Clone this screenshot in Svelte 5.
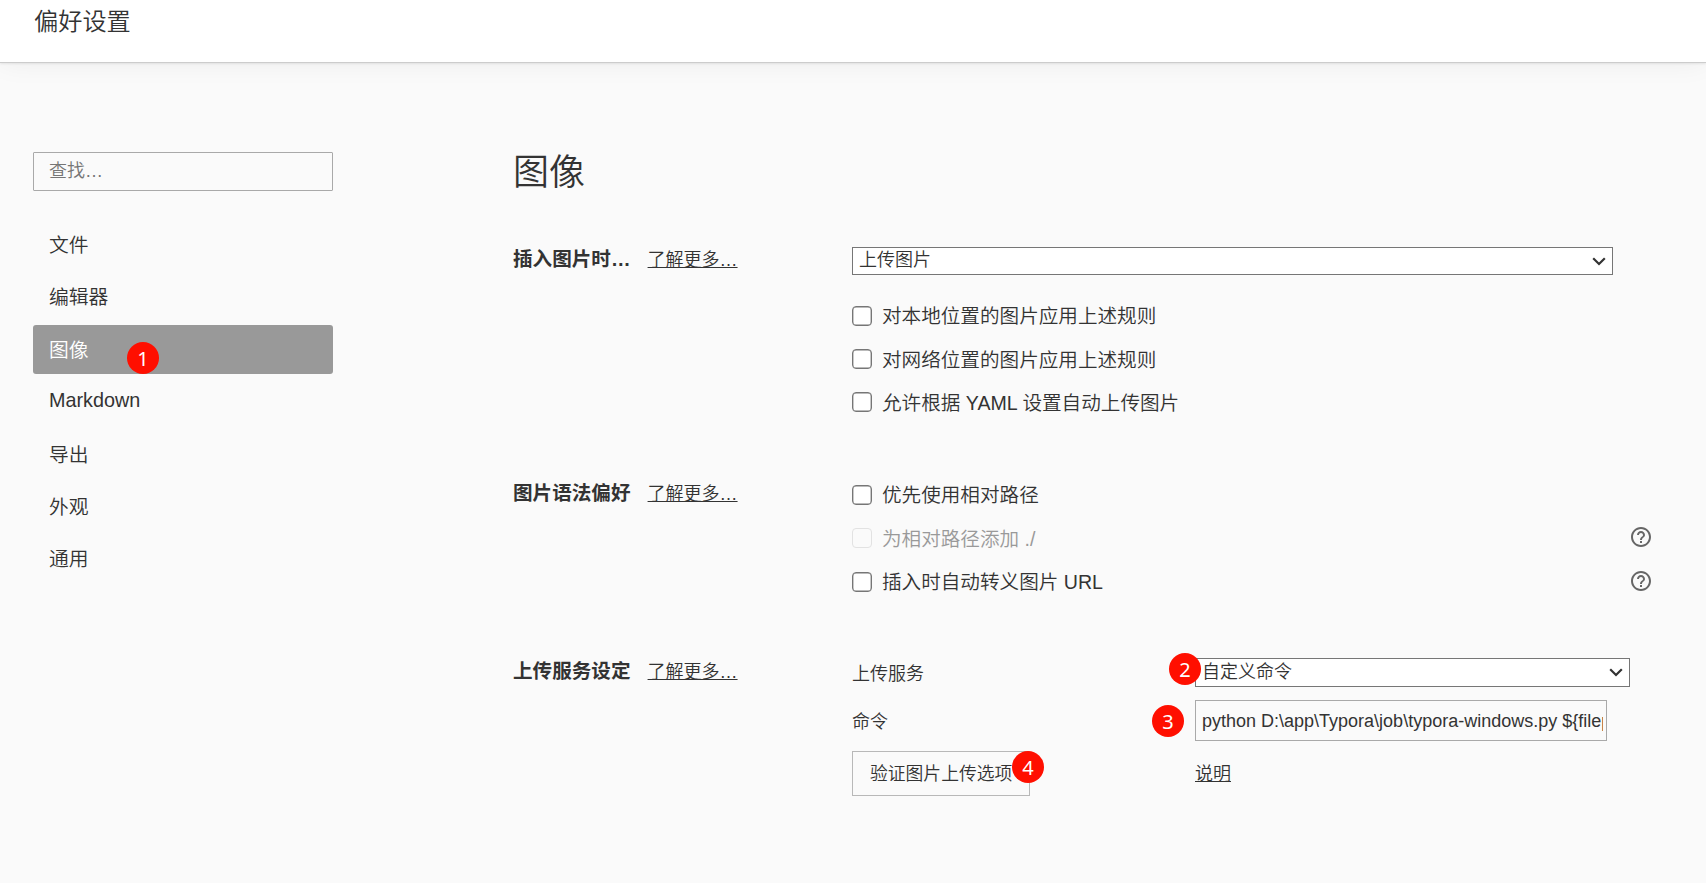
<script lang="ts">
  let active = $state("图像");
  let insertAction = $state("upload");
  let service = $state("custom");
  let command = $state("python D:\\app\\Typora\\job\\typora-windows.py ${filepath}");

  const menu = ["文件", "编辑器", "图像", "Markdown", "导出", "外观", "通用"];

  let insertRules = $state([
    { label: "对本地位置的图片应用上述规则", checked: false },
    { label: "对网络位置的图片应用上述规则", checked: false },
    { label: "允许根据 YAML 设置自动上传图片", checked: false },
  ]);

  let syntaxRules = $state([
    { label: "优先使用相对路径", checked: false, disabled: false, help: false },
    { label: "为相对路径添加 ./", checked: false, disabled: true, help: true },
    { label: "插入时自动转义图片 URL", checked: false, disabled: false, help: true },
  ]);
</script>

{#snippet chevron()}
  <svg class="chevron" viewBox="0 0 14 9" width="14" height="9">
    <path d="M1.2 1.2 L7 7 L12.8 1.2" fill="none" stroke="#333" stroke-width="2.2" />
  </svg>
{/snippet}

{#snippet heading(text: string)}
  <div class="heading">
    <strong>{text}</strong>
    <a href="#more">了解更多…</a>
  </div>
{/snippet}

<header>偏好设置</header>

<main>
  <aside>
    <input class="search" type="text" placeholder="查找…" />
    <nav>
      {#each menu as item}
        <button class="menu-item" class:active={item === active} onclick={() => (active = item)}>
          {item}
          {#if item === "图像"}
            <span class="badge one">1</span>
          {/if}
        </button>
      {/each}
    </nav>
  </aside>

  <div class="content">
    <h1>图像</h1>

    <section class="insert">
      {@render heading("插入图片时…")}
      <div class="body">
        <div class="select wide">
          <select bind:value={insertAction}>
            <option value="upload">上传图片</option>
            <option value="none">无特殊操作</option>
          </select>
          {@render chevron()}
        </div>
        <div class="rules">
          {#each insertRules as rule}
            <label class="rule">
              <input type="checkbox" bind:checked={rule.checked} />
              <span>{rule.label}</span>
            </label>
          {/each}
        </div>
      </div>
    </section>

    <section class="syntax">
      {@render heading("图片语法偏好")}
      <div class="body">
        {#each syntaxRules as rule}
          <div class="rule-row">
            <label class="rule" class:disabled={rule.disabled}>
              <input type="checkbox" bind:checked={rule.checked} disabled={rule.disabled} />
              <span>{rule.label}</span>
            </label>
            {#if rule.help}
              <svg class="help" viewBox="2 2 20 20" width="20" height="20">
                <path
                  fill="#666"
                  d="M11 18h2v-2h-2v2zm1-16C6.48 2 2 6.48 2 12s4.48 10 10 10 10-4.48 10-10S17.52 2 12 2zm0 18c-4.41 0-8-3.59-8-8s3.59-8 8-8 8 3.59 8 8-3.59 8-8 8zm0-14c-2.21 0-4 1.79-4 4h2c0-1.1.9-2 2-2s2 .9 2 2c0 2-3 1.75-3 5h2c0-2.25 3-2.5 3-5 0-2.210-1.790-4-4-4z"
                />
              </svg>
            {/if}
          </div>
        {/each}
      </div>
    </section>

    <section class="upload">
      {@render heading("上传服务设定")}
      <div class="body">
        <div class="field">
          <span class="name">上传服务</span>
          <div class="select">
            <select bind:value={service}>
              <option value="custom">自定义命令</option>
              <option value="picgo">PicGo</option>
            </select>
            {@render chevron()}
            <span class="badge two">2</span>
          </div>
        </div>
        <div class="field">
          <span class="name">命令</span>
          <div class="command">
            <input type="text" bind:value={command} />
            <span class="badge three">3</span>
          </div>
        </div>
        <div class="field last">
          <div class="name">
            <button class="verify">
              验证图片上传选项
              <span class="badge four">4</span>
            </button>
          </div>
          <a href="#help">说明</a>
        </div>
      </div>
    </section>
  </div>
</main>

<style>
  :global(body) {
    background: #fafafa;
    color: #333;
    font-family: "Liberation Sans", "Noto Sans CJK SC", sans-serif;
    font-size: 18px;
    font-weight: 350;
    overflow: hidden;
  }

  header {
    box-sizing: border-box;
    height: 63px;
    padding-left: 34px;
    background: #fff;
    border-bottom: 1px solid #ccc;
    box-shadow: 0 1px 2px rgba(0, 0, 0, 0.08), 0 0 28px rgba(0, 0, 0, 0.06);
    font-size: 24.2px;
    line-height: 44px;
  }

  main {
    display: flex;
    gap: 180px;
    padding: 89px 0 0 33px;
  }

  input,
  select,
  button {
    box-sizing: border-box;
    margin: 0;
    color: inherit;
    font: inherit;
  }

  a {
    color: inherit;
    text-decoration: underline;
    text-underline-offset: 1px;
    text-decoration-thickness: 1px;
    text-decoration-skip-ink: none;
  }

  aside {
    width: 300px;
  }

  .search {
    display: block;
    width: 300px;
    height: 39px;
    padding: 0 15px 1px;
    background: transparent;
    border: 1px solid #a9a9a9;
    border-radius: 1px;
  }

  .search::placeholder {
    color: #757575;
  }

  nav {
    display: flex;
    flex-direction: column;
    gap: 3.4px;
    margin-top: 29px;
  }

  .menu-item {
    position: relative;
    height: 49px;
    padding: 0 16px 2px;
    background: transparent;
    border: none;
    border-radius: 3px;
    font-size: 19.8px;
    text-align: left;
  }

  .menu-item.active {
    background: #999;
    color: #fff;
  }

  .badge {
    position: absolute;
    width: 32px;
    height: 32px;
    border-radius: 50%;
    background: #ff0f00;
    color: #fff;
    font-family: "Noto Sans", sans-serif;
    font-size: 20px;
    font-weight: 400;
    line-height: 33px;
    text-align: center;
  }

  .one {
    top: 17px;
    left: 94px;
  }

  .two {
    top: -5px;
    left: -26px;
  }

  .three {
    top: 5px;
    left: -43px;
  }

  .four {
    top: -1px;
    right: -15px;
  }

  h1 {
    margin: 0 0 55px;
    padding-top: 2px;
    font-size: 36px;
    font-weight: 350;
    line-height: 38px;
  }

  section {
    display: flex;
  }

  .heading {
    display: flex;
    align-items: baseline;
    gap: 17px;
    width: 339px;
    line-height: 24px;
  }

  strong {
    font-size: 19.6px;
    font-weight: 700;
  }

  .body {
    width: 799px;
  }

  .select {
    position: relative;
    width: 435px;
    height: 29px;
  }

  .select.wide {
    width: 761px;
    height: 28px;
  }

  select {
    display: block;
    width: 100%;
    height: 100%;
    padding: 0 6px 1px;
    appearance: none;
    background: #fff;
    border: 1px solid #767676;
    border-radius: 0;
  }

  .select.wide select {
    padding-bottom: 2px;
  }

  .chevron {
    position: absolute;
    top: 10px;
    right: 7px;
  }

  .rules {
    margin-top: 19px;
  }

  .rule,
  .rule-row {
    display: flex;
    align-items: center;
    height: 43.4px;
    font-size: 19.6px;
  }

  .rule {
    gap: 10px;
  }

  .rule span {
    padding-bottom: 2px;
  }

  .rule input {
    width: 20px;
    height: 20px;
    appearance: none;
    background: #fff;
    border: 1.5px solid #767676;
    border-radius: 4px;
    box-shadow: inset 0 0 0 0.4px #767676;
  }

  .rule input:checked {
    background: #767676;
  }

  .rule input:disabled {
    background: transparent;
    border-color: #e2e2e2;
    box-shadow: none;
  }

  .rule.disabled {
    color: #999;
  }

  .rule-row {
    justify-content: space-between;
  }

  .help {
    margin-bottom: 2px;
  }

  .syntax {
    margin-top: 49px;
  }

  .syntax .heading {
    padding-top: 8px;
  }

  .upload {
    margin-top: 45px;
  }

  .upload .heading {
    padding-top: 11px;
  }

  .field {
    display: flex;
    align-items: center;
    height: 48px;
  }

  .field.last {
    height: 59px;
  }

  .field.last > a {
    padding-bottom: 3px;
  }

  .name {
    width: 343px;
  }

  .command {
    position: relative;
  }

  .command input {
    width: 412px;
    height: 41px;
    padding: 2px 3px 0 6px;
    background: transparent;
    border: 1px solid #a9a9a9;
  }

  .verify {
    position: relative;
    width: 178px;
    height: 45px;
    padding: 0 0 4px 17px;
    background: transparent;
    border: 1px solid #b8b8b8;
    font-size: 17.8px;
    text-align: left;
    white-space: nowrap;
  }
</style>
